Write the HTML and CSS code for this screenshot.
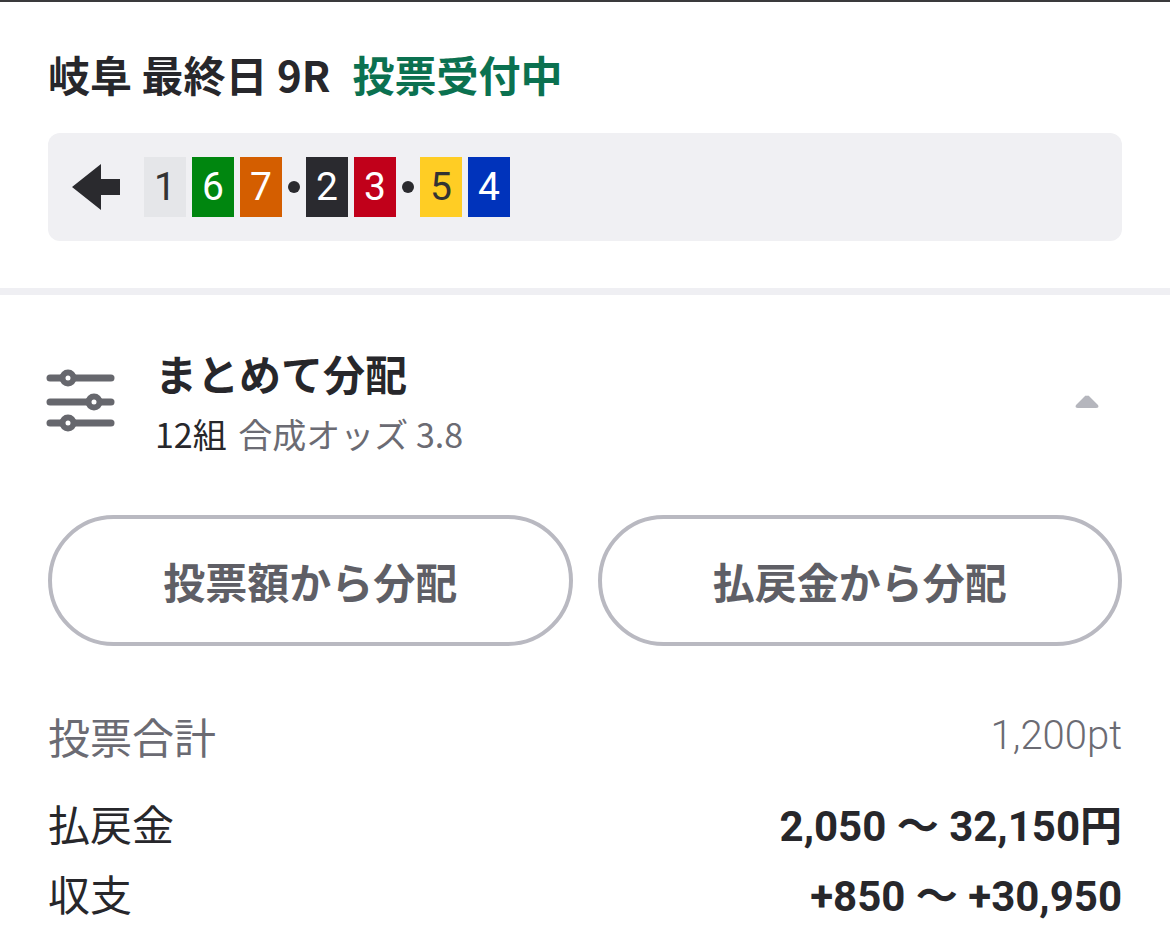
FILE: index.html
```html
<!DOCTYPE html>
<html lang="ja">
<head>
<meta charset="utf-8">
<link rel="stylesheet" href="styles.css">
</head>
<body>
<div class="page">
  <header class="race">
    <h1 class="race-title"><span class="race-name">岐阜 最終日 9R</span><span class="race-status">投票受付中</span></h1>
    <div class="combo">
      <svg class="arrow" width="48" height="48" viewBox="0 0 48 48"><path d="M0 24 L29 1 L29 16 L48 16 L48 32 L29 32 L29 47 Z" fill="#2a2a2e"/></svg>
      <div class="nums">
        <span class="num n1">1</span>
        <span class="num n6">6</span>
        <span class="num n7">7</span>
        <span class="sep"></span>
        <span class="num n2">2</span>
        <span class="num n3">3</span>
        <span class="sep"></span>
        <span class="num n5">5</span>
        <span class="num n4">4</span>
      </div>
    </div>
  </header>
  <div class="divider"></div>
  <section class="dist">
    <div class="dist-head">
      <svg class="sliders" width="72" height="68" viewBox="0 0 72 68">
        <g stroke="#66676d" stroke-width="7" stroke-linecap="round" fill="none">
          <line x1="5" y1="10" x2="66" y2="10"/>
          <line x1="5" y1="34" x2="66" y2="34"/>
          <line x1="5" y1="55" x2="66" y2="55"/>
        </g>
        <g fill="#fff" stroke="#66676d" stroke-width="6">
          <circle cx="23" cy="10" r="5.5"/>
          <circle cx="49" cy="34" r="5.5"/>
          <circle cx="23" cy="55" r="5.5"/>
        </g>
      </svg>
      <div class="dist-text">
        <div class="dist-title">まとめて分配</div>
        <div class="dist-sub"><span class="dark">12組</span> 合成オッズ 3.8</div>
      </div>
      <svg class="caret" width="26" height="16" viewBox="0 0 26 16"><path d="M13 2 Q14 1 15.5 2.5 L24 11 Q25.5 14 22 14 L4 14 Q0.5 14 2 11 L10.5 2.5 Q12 1 13 2 Z" fill="#b5b6bd"/></svg>
    </div>
    <div class="buttons">
      <button class="pill">投票額から分配</button>
      <button class="pill">払戻金から分配</button>
    </div>
    <dl class="summary">
      <div class="row muted"><dt>投票合計</dt><dd>1,200pt</dd></div>
      <div class="row"><dt>払戻金</dt><dd class="strong">2,050 〜 32,150円</dd></div>
      <div class="row"><dt>収支</dt><dd class="strong">+850 〜 +30,950</dd></div>
    </dl>
  </section>
</div>
</body>
</html>
```
FILE: styles.css
```css
* { box-sizing: border-box; }
html, body { margin: 0; padding: 0; background: #fff; }
body {
  font-family: "Noto Sans CJK JP", "Noto Sans", sans-serif;
  color: #27272b;
  width: 1170px;
  height: 934px;
  overflow: hidden;
}
.page { border-top: 2px solid #3a3a3c; }
.race { padding: 0 48px; }
.race-title {
  margin: 0;
  padding-top: 46px;
  font-size: 42px;
  line-height: 52px;
  font-weight: 700;
  display: flex;
  gap: 22px;
}
.race-name { color: #27272b; }
.race-status { color: #0b7150; }
.combo {
  margin-top: 33px;
  background: #f0f0f3;
  border-radius: 12px;
  padding: 24px 24px;
  display: flex;
  align-items: center;
  gap: 24px;
}
.arrow { display: block; }
.nums { display: flex; align-items: center; gap: 6px; }
.num {
  width: 42px;
  height: 60px;
  display: flex;
  align-items: center;
  justify-content: center;
  font-family: "Roboto", "Liberation Sans", sans-serif;
  font-size: 39px;
  color: #fff;
}
.n1 { background: #e5e6e9; color: #333; }
.n6 { background: #00860f; }
.n7 { background: #d45e00; }
.n2 { background: #2a2a2f; }
.n3 { background: #c1001a; }
.n5 { background: #ffcd24; color: #333; }
.n4 { background: #0033bb; }
.sep {
  width: 12px;
  height: 12px;
  border-radius: 50%;
  background: #2a2a2e;
}
.divider { height: 7px; background: #efeff3; margin-top: 47px; }
.dist { padding: 0 48px; }
.dist-head {
  display: flex;
  align-items: center;
  padding-top: 50px;
}
.sliders { display: block; margin-left: -3px; }
.dist-text { margin-left: 38px; flex: 1; }
.dist-title { font-size: 42px; font-weight: 700; line-height: 56px; }
.dist-sub { font-size: 34px; line-height: 48px; margin-top: 9px; color: #6b6b73; }
.dist-sub .dark { color: #27272b; margin-right: 4px; }
.caret { margin-right: 22px; display: block; }
.buttons {
  display: grid;
  grid-template-columns: 1fr 1fr;
  gap: 25px;
  margin-top: 57px;
}
.pill {
  height: 131px;
  border: 4px solid #b9b9c1;
  border-radius: 66px;
  background: #fff;
  font-family: "Noto Sans CJK JP", sans-serif;
  font-size: 42px;
  font-weight: 700;
  color: #5f5f66;
}
.summary { margin: 54px 0 0; }
.row {
  display: flex;
  justify-content: space-between;
  align-items: center;
  height: 70px;
  font-size: 42px;
}
.row.muted { margin-bottom: 17px; }
.row dt, .row dd { margin: 0; }
.muted { color: #6b6b73; }
.muted dd { font-family: "Roboto", "Noto Sans CJK JP", sans-serif; font-weight: 300; font-size: 40px; }
.strong { font-family: "Roboto", "Noto Sans CJK JP", sans-serif; font-weight: 700; font-size: 42px; }
```
